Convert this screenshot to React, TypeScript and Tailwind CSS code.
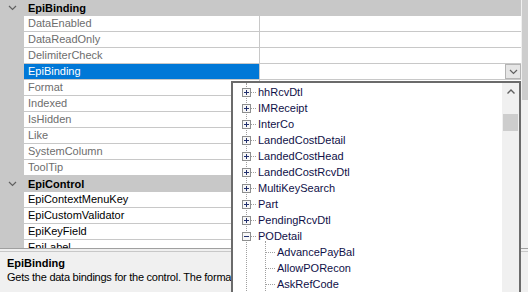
import React from 'react'

type Row = { name: string; gray?: boolean; selected?: boolean }

const groups: { title: string; rows: Row[] }[] = [
  {
    title: 'EpiBinding',
    rows: [
      { name: 'DataEnabled', gray: true },
      { name: 'DataReadOnly', gray: true },
      { name: 'DelimiterCheck', gray: true },
      { name: 'EpiBinding', selected: true },
      { name: 'Format', gray: true },
      { name: 'Indexed', gray: true },
      { name: 'IsHidden', gray: true },
      { name: 'Like', gray: true },
      { name: 'SystemColumn', gray: true },
      { name: 'ToolTip', gray: true },
    ],
  },
  {
    title: 'EpiControl',
    rows: [
      { name: 'EpiContextMenuKey' },
      { name: 'EpiCustomValidator' },
      { name: 'EpiKeyField' },
      { name: 'EpiLabel' },
    ],
  },
]

const tables = [
  'hhRcvDtl',
  'IMReceipt',
  'InterCo',
  'LandedCostDetail',
  'LandedCostHead',
  'LandedCostRcvDtl',
  'MultiKeySearch',
  'Part',
  'PendingRcvDtl',
]

const fields = ['AdvancePayBal', 'AllowPORecon', 'AskRefCode']

function Chevron() {
  return (
    <svg width="9" height="6" viewBox="0 0 9 6" className="text-[#606060]">
      <polyline points="1,1 4.5,4.5 8,1" fill="none" stroke="currentColor" strokeWidth="1.2" />
    </svg>
  )
}

function ExpandBox({ open }: { open?: boolean }) {
  return (
    <svg width="9" height="9" viewBox="0 0 9 9" className="shrink-0 relative">
      <rect x="0.5" y="0.5" width="8" height="8" fill="#f7f7f7" stroke="#8e8f8f" />
      <line x1="2" y1="4.5" x2="7" y2="4.5" stroke="#22306e" />
      {!open && <line x1="4.5" y1="2" x2="4.5" y2="7" stroke="#22306e" />}
    </svg>
  )
}

function TreeRoot({ label, open }: { label: string; open?: boolean }) {
  return (
    <div className="h-4 flex items-center pl-[9px]">
      <ExpandBox open={open} />
      <span className="w-[5px] border-t border-dotted border-[#a0a0a0]" />
      <span className="ml-[2px] text-[#101048] whitespace-nowrap">{label}</span>
    </div>
  )
}

function TreeChild({ label }: { label: string }) {
  return (
    <div className="h-4 flex items-center pl-[33px]">
      <span className="w-[9px] border-t border-dotted border-[#a0a0a0]" />
      <span className="ml-[2px] text-[#101048] whitespace-nowrap">{label}</span>
    </div>
  )
}

function BindingPopup() {
  return (
    <div className="absolute left-[231px] top-[81px] w-[290px] h-[230px] border-2 border-[#6b6b6b] bg-white flex">
      <div className="relative flex-1 pt-px overflow-hidden">
        <div className="absolute left-[13px] top-0 bottom-0 border-l border-dotted border-[#a0a0a0]" />
        <div className="absolute left-[32px] top-[158px] bottom-0 border-l border-dotted border-[#a0a0a0]" />
        {tables.map((t) => (
          <TreeRoot key={t} label={t} />
        ))}
        <TreeRoot label="PODetail" open />
        {fields.map((f) => (
          <TreeChild key={f} label={f} />
        ))}
      </div>
      <div className="w-[17px] bg-[#f0f0f0] flex flex-col items-center">
        <div className="h-[17px] w-full flex items-center justify-center">
          <svg width="8" height="5" viewBox="0 0 8 5">
            <polyline points="0.5,4.5 4,1 7.5,4.5" fill="none" stroke="#606060" strokeWidth="1.4" />
          </svg>
        </div>
        <div className="mt-[14px] w-[15px] h-[17px] bg-[#cdcdcd]" />
      </div>
    </div>
  )
}

export default function App() {
  return (
    <div className="relative w-[528px] h-[292px] overflow-hidden bg-[#f0f0f0] font-['Liberation_Sans',Arial,sans-serif] text-[11px] leading-none select-none">
      <div className="flex h-[249px] border-b border-[#a0a0a0]">
        <div className="w-[521px] overflow-hidden bg-[#c8c8c8]">
          {groups.map((g) => (
            <div key={g.title}>
              <div className="h-4 flex items-center">
                <div className="w-6 flex justify-center pl-[1px]">
                  <Chevron />
                </div>
                <span className="pl-1 font-bold text-black">{g.title}</span>
              </div>
              {g.rows.map((r) => (
                <div key={r.name} className="h-4 flex">
                  <div className="w-6" />
                  <div
                    className={
                      r.selected
                        ? 'w-[236px] border-b border-r border-[#c8c8c8] bg-white flex'
                        : 'w-[236px] border-b border-r border-[#c8c8c8] bg-white flex items-center pl-1'
                    }
                  >
                    {r.selected ? (
                      <div className="flex-1 h-[15px] bg-[#0078d7] text-white flex items-center pl-1">{r.name}</div>
                    ) : (
                      <span className={r.gray ? 'text-[#6d6d6d]' : 'text-black'}>{r.name}</span>
                    )}
                  </div>
                  <div className="flex-1 border-b border-[#c8c8c8] bg-white flex justify-end">
                    {r.selected && (
                      <div className="w-4 h-[15px] bg-[#e5e5e5] border border-[#b4b4b4] flex items-center justify-center">
                        <Chevron />
                      </div>
                    )}
                  </div>
                </div>
              ))}
            </div>
          ))}
        </div>
        <div className="flex-1 bg-[#f0f0f0]">
          <div className="h-[100px] bg-[#cdcdcd] ml-px" />
        </div>
      </div>
      <div className="mt-[2px] border-t border-[#c8c8c8] px-[7px] pt-[4px]">
        <div className="h-[14px] flex items-center font-bold text-black">EpiBinding</div>
        <div className="w-[224px] h-[15px] flex items-center text-black tracking-[-0.25px] whitespace-nowrap overflow-hidden">
          Gets the data bindings for the control. The format is DataView.Column.
        </div>
      </div>
      <BindingPopup />
    </div>
  )
}
